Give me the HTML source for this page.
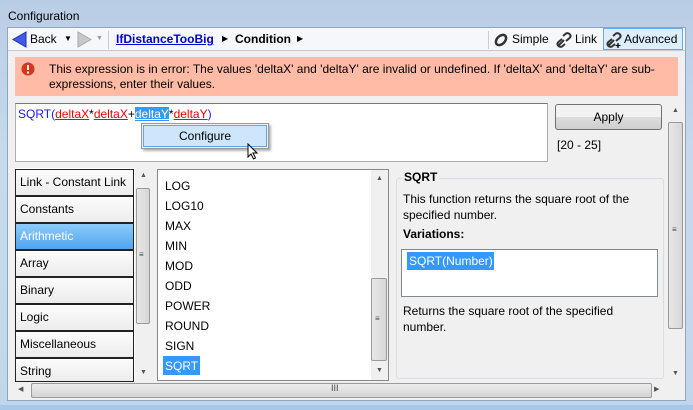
<!DOCTYPE html>
<html><head><style>
*{margin:0;padding:0;box-sizing:border-box}
body{width:693px;height:410px;overflow:hidden;font-family:"Liberation Sans",sans-serif;font-size:12px;color:#000;background:linear-gradient(#b9cde5,#c8d9ec 40%,#c2d6eb);position:relative}
.a{position:absolute}
.win{left:7px;top:27px;width:679px;height:374px;background:#f0f0f0;border:1px solid #8fa6bf}
.sb{background:#f0f0f0}
.thumbv{background:linear-gradient(90deg,#e8e8e8,#d6d6d6);border:1px solid #9a9a9a;border-radius:2px}
.li{position:absolute;left:15px;width:119px;height:27px;border:1px solid #222;background:linear-gradient(#fcfcfc,#ececec);padding:5px 0 0 4px;font-size:12px}
.fn{position:absolute;left:165px;font-size:12px}
.arr{position:absolute;font-size:7px;color:#555}
</style></head><body>
<div class="a" style="left:8px;top:9px;font-size:12px;color:#000">Configuration</div>
<div class="a win"></div>
<!-- toolbar -->
<div class="a" style="left:8px;top:28px;width:677px;height:23px;background:#f5f7fa;border-bottom:1px solid #c8c8c8"></div>
<svg class="a" style="left:11px;top:31px" width="18" height="17"><path d="M15 1 L2 8.5 L15 16 Z" fill="#3f5be8" stroke="#2030b0"/></svg>
<div class="a" style="left:30px;top:32px;font-size:12px">Back</div>
<div class="a" style="left:64px;top:34px;font-size:8px">▼</div>
<svg class="a" style="left:75px;top:31px" width="18" height="17"><path d="M3 1 L16 8.5 L3 16 Z" fill="#c8c8c8" stroke="#aaa"/></svg>
<div class="a" style="left:96px;top:35px;font-size:7px;color:#999">▼</div>
<div class="a" style="left:108px;top:31px;width:1px;height:18px;background:#ccc"></div>
<div class="a" style="left:116px;top:32px;font-weight:bold;color:#0000cc;text-decoration:underline">IfDistanceTooBig</div>
<div class="a" style="left:222px;top:34px;font-size:8px">▶</div>
<div class="a" style="left:235px;top:32px;font-weight:bold">Condition</div>
<div class="a" style="left:297px;top:34px;font-size:8px">▶</div>
<div class="a" style="left:488px;top:31px;width:1px;height:18px;background:#ccc"></div>
<svg class="a" style="left:493px;top:32px" width="16" height="16"><ellipse cx="8" cy="8" rx="6" ry="4" transform="rotate(-45 8 8)" fill="none" stroke="#333" stroke-width="2.5"/></svg>
<div class="a" style="left:512px;top:32px">Simple</div>
<svg class="a" style="left:556px;top:32px" width="16" height="16"><path d="M3 13 L8 8 M7 4 L10 1.5 Q12 0.5 14 2.5 Q15.5 4.5 13 6.5 L10 9 M9 12 L6 14.5 Q4 15.5 2 13.5 Q0.5 11.5 3 9.5 L6 7" fill="none" stroke="#333" stroke-width="2"/></svg>
<div class="a" style="left:575px;top:32px">Link</div>
<div class="a" style="left:603px;top:28px;width:80px;height:22px;background:#dceefc;border:1px solid #66aaea"></div>
<svg class="a" style="left:606px;top:32px" width="16" height="16"><path d="M3 13 L8 8 M7 4 L10 1.5 Q12 0.5 14 2.5 Q15.5 4.5 13 6.5 L10 9 M9 12 L6 14.5 Q4 15.5 2 13.5 Q0.5 11.5 3 9.5 L6 7" fill="none" stroke="#333" stroke-width="2"/><path d="M12 11v5M9.5 13.5h5" stroke="#000" stroke-width="1.3"/></svg>
<div class="a" style="left:624px;top:32px">Advanced</div>
<!-- error -->
<div class="a" style="left:15px;top:57px;width:663px;height:39px;background:#ffbba6"></div>
<svg class="a" style="left:21px;top:62px" width="14" height="14"><circle cx="7" cy="7" r="6.5" fill="#d8361a"/><rect x="6" y="3" width="2" height="5" fill="#fff"/><rect x="6" y="9.5" width="2" height="2" fill="#fff"/></svg>
<div class="a" style="left:49px;top:62px;line-height:15px;width:630px;font-size:12px">This expression is in error: The values 'deltaX' and 'deltaY' are invalid or undefined. If 'deltaX' and 'deltaY' are sub-<br>expressions, enter their values.</div>
<!-- expression box -->
<div class="a" style="left:15px;top:103px;width:533px;height:59px;background:#fff;border:1px solid #abadb3;border-top-color:#777"></div>
<div class="a" style="left:18px;top:107px;font-size:12px;color:#1a1ae6">SQRT(<span style="color:#e00;text-decoration:underline">deltaX</span><span style="color:#000">*</span><span style="color:#e00;text-decoration:underline">deltaX</span><span style="color:#000">+</span><span style="background:#3399ff;color:#fff;text-decoration:underline">deltaY</span><span style="color:#000">*</span><span style="color:#e00;text-decoration:underline">deltaY</span>)</div>
<div class="a" style="left:141px;top:123px;width:128px;height:26px;background:#f0f0f0;border:1px solid #999;box-shadow:2px 2px 2px rgba(0,0,0,.3)"></div>
<div class="a" style="left:143px;top:125px;width:124px;height:22px;background:#cde6fb;border:1px solid #66a6e0;text-align:center;padding-top:3px">Configure</div>
<svg class="a" style="left:247px;top:143px" width="12" height="18"><path d="M1 1 L1 14 L4 11 L6.5 16 L8.5 15 L6 10 L10 10 Z" fill="#fff" stroke="#000"/></svg>
<!-- apply -->
<div class="a" style="left:555px;top:104px;width:107px;height:26px;border:1px solid #707070;border-radius:3px;background:linear-gradient(#f2f2f2 50%,#dddddd 50%,#cfcfcf);text-align:center;padding-top:5px">Apply</div>
<div class="a" style="left:557px;top:138px">[20 - 25]</div>
<!-- right scrollbar -->
<div class="a sb" style="left:667px;top:104px;width:17px;height:277px"></div>
<div class="arr" style="left:672px;top:107px">▲</div>
<div class="a thumbv" style="left:668px;top:122px;width:15px;height:207px"></div>
<div class="a" style="left:672px;top:225px;font-size:8px;color:#444">≡</div>
<div class="arr" style="left:672px;top:370px">▼</div>
<!-- left list -->
<div class="a" style="left:15px;top:168px;width:120px;height:214px;background:#fff"></div>
<div class="li" style="top:169px">Link - Constant Link</div>
<div class="li" style="top:196px">Constants</div>
<div class="li" style="top:223px;background:linear-gradient(#8ecbfb,#4ea5f0);color:#fff">Arithmetic</div>
<div class="li" style="top:250px">Array</div>
<div class="li" style="top:277px">Binary</div>
<div class="li" style="top:304px">Logic</div>
<div class="li" style="top:331px">Miscellaneous</div>
<div class="li" style="top:358px;height:24px">String</div>
<div class="a sb" style="left:135px;top:169px;width:16px;height:213px"></div>
<div class="arr" style="left:140px;top:172px">▲</div>
<div class="a thumbv" style="left:136px;top:188px;width:14px;height:136px"></div>
<div class="a" style="left:139px;top:250px;font-size:8px;color:#444">≡</div>
<div class="arr" style="left:140px;top:369px">▼</div>
<!-- middle list -->
<div class="a" style="left:157px;top:169px;width:232px;height:212px;background:#fff;border:1px solid #888"></div>
<div class="fn" style="top:179px">LOG</div>
<div class="fn" style="top:199px">LOG10</div>
<div class="fn" style="top:219px">MAX</div>
<div class="fn" style="top:239px">MIN</div>
<div class="fn" style="top:259px">MOD</div>
<div class="fn" style="top:279px">ODD</div>
<div class="fn" style="top:299px">POWER</div>
<div class="fn" style="top:319px">ROUND</div>
<div class="fn" style="top:339px">SIGN</div>
<div class="a" style="left:163px;top:356px;width:37px;height:19px;background:#3399ff;color:#fff;padding:3px 0 0 2px">SQRT</div>
<div class="a sb" style="left:371px;top:170px;width:17px;height:210px"></div>
<div class="arr" style="left:376px;top:175px">▲</div>
<div class="a thumbv" style="left:371px;top:278px;width:16px;height:83px"></div>
<div class="a" style="left:375px;top:314px;font-size:8px;color:#444">≡</div>
<div class="arr" style="left:376px;top:367px">▼</div>
<!-- group -->
<div class="a" style="left:396px;top:178px;width:268px;height:201px;border:1px solid #d5dfe5;border-radius:3px"></div>
<div class="a" style="left:402px;top:170px;background:#f0f0f0;padding:0 2px;font-weight:bold">SQRT</div>
<div class="a" style="left:403px;top:191px;line-height:16px;width:250px">This function returns the square root of the specified number.</div>
<div class="a" style="left:403px;top:227px;font-weight:bold">Variations:</div>
<div class="a" style="left:401px;top:249px;width:257px;height:48px;background:#fff;border:1px solid #828790"></div>
<div class="a" style="left:407px;top:252px;width:87px;height:18px;background:#3399ff;color:#fff;padding:2px 0 0 2px">SQRT(Number)</div>
<div class="a" style="left:403px;top:303px;line-height:16px;width:250px">Returns the square root of the specified number.</div>
<!-- bottom scrollbar -->
<div class="a sb" style="left:10px;top:382px;width:657px;height:17px"></div>
<div class="arr" style="left:18px;top:385px">◀</div>
<div class="a" style="left:31px;top:383px;width:621px;height:15px;border:1px solid #9a9a9a;border-radius:2px;background:linear-gradient(#ececec,#d4d4d4)"></div>
<div class="a" style="left:331px;top:383px;font-size:9px;color:#444">III</div>
<div class="arr" style="left:654px;top:385px">▶</div>
<div class="a" style="left:0;top:405px;width:693px;height:5px;background:#a8c8e8"></div>
</body></html>
